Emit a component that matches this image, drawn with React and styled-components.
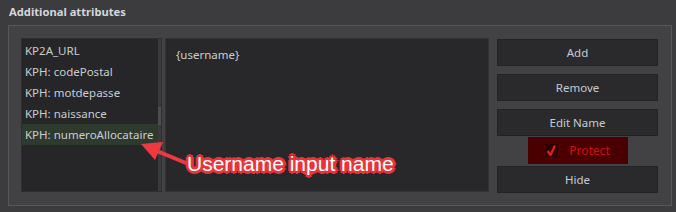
import React from 'react';
import styled, { createGlobalStyle } from 'styled-components';

const GlobalStyle = createGlobalStyle`
  body {
    margin: 0;
    background: #3c3c3f;
    font-family: "Noto Sans", "Open Sans", sans-serif;
    font-size: 11.5px;
    color: #cfd2d6;
  }
`;

const Page = styled.div`
  position: relative;
  width: 676px;
  height: 212px;
  padding: 4px 0 0 8px;
  box-sizing: border-box;
`;

const Title = styled.div`
  font-weight: bold;
  font-size: 11.2px;
  height: 21px;
  line-height: 16px;
  padding-left: 1px;
  color: #d4d6d9;
`;

const GroupBox = styled.div`
  width: 664px;
  height: 181px;
  box-sizing: border-box;
  border: 1px solid #57575b;
  background: #424245;
  padding: 12px;
  display: flex;
`;

const ListBox = styled.div`
  position: relative;
  width: 141px;
  height: 154px;
  box-sizing: border-box;
  background: #262628;
  border: 1px solid #2e2e31;
  padding-top: 1px;
`;

const ScrollTrack = styled.div`
  position: absolute;
  right: 0;
  top: 0;
  bottom: 0;
  width: 3px;
  background: #3a3a3d;
`;

const ScrollThumb = styled.div`
  position: absolute;
  right: 0;
  top: 68px;
  width: 3px;
  height: 18px;
  background: #4c4c50;
`;

const ListItem = styled.div`
  height: 21px;
  line-height: 21px;
  padding-left: 3px;
  margin-right: 3px;
  white-space: nowrap;
  color: #c9cdd1;
  background: ${p => (p.selected ? '#2f3a2f' : 'transparent')};
`;

const TextArea = styled.div`
  width: 324px;
  height: 154px;
  margin-left: 3px;
  box-sizing: border-box;
  background: #28282a;
  border: 1px solid #333336;
  padding: 8px 10px;
  color: #c9cdd1;
`;

const ButtonColumn = styled.div`
  width: 161px;
  margin-left: 8px;
  padding-top: 1px;
  display: flex;
  flex-direction: column;
  align-items: center;
`;

const Button = styled.div`
  width: 161px;
  height: 27px;
  box-sizing: border-box;
  margin-top: ${p => p.gap || 0}px;
  background: #2a2a2c;
  border: 1px solid #232325;
  display: flex;
  align-items: center;
  justify-content: center;
  color: #c6cbd1;
`;

const ProtectToggle = styled.div`
  width: 100px;
  height: 27px;
  margin-top: 1px;
  background: #4a0000;
  display: flex;
  align-items: center;
  justify-content: center;
  gap: 11px;
  color: #cc1010;
  font-size: 12px;
`;

const CheckBox = styled.span`
  width: 13px;
  height: 13px;
  background: #2c0000;
  display: flex;
  align-items: center;
  justify-content: center;
`;

const Annotation = styled.svg`
  position: absolute;
  left: 0;
  top: 0;
  pointer-events: none;
`;

const Callout = styled.span`
  position: absolute;
  left: 187px;
  top: 151px;
  font-family: "Liberation Sans", Arial, sans-serif;
  font-size: 21px;
  line-height: 26px;
  color: #ffffff;
  white-space: nowrap;
  text-shadow:
    2px 0 0 #e8353a, -2px 0 0 #e8353a, 0 2px 0 #e8353a, 0 -2px 0 #e8353a,
    2px 2px 0 #e8353a, -2px -2px 0 #e8353a, 2px -2px 0 #e8353a, -2px 2px 0 #e8353a,
    3px 0 0 #e8353a, -3px 0 0 #e8353a, 0 3px 0 #e8353a, 0 -3px 0 #e8353a;
`;

const items = ['KP2A_URL', 'KPH: codePostal', 'KPH: motdepasse', 'KPH: naissance', 'KPH: numeroAllocataire'];

export default function App() {
  return (
    <>
      <GlobalStyle />
      <Page>
        <Title>Additional attributes</Title>
        <GroupBox>
          <ListBox>
            {items.map((it, i) => (
              <ListItem key={it} selected={i === 4}>{it}</ListItem>
            ))}
            <ScrollTrack />
            <ScrollThumb />
          </ListBox>
          <TextArea>{'{username}'}</TextArea>
          <ButtonColumn>
            <Button>Add</Button>
            <Button gap={8}>Remove</Button>
            <Button gap={8}>Edit Name</Button>
            <ProtectToggle>
              <CheckBox>
                <svg width="13" height="13" viewBox="0 0 13 13">
                  <path d="M2.5 7 L5.5 11 L10 1.5" fill="none" stroke="#f01818" strokeWidth="2.2" strokeLinejoin="round" />
                </svg>
              </CheckBox>
              <span>Protect</span>
            </ProtectToggle>
            <Button gap={2}>Hide</Button>
          </ButtonColumn>
        </GroupBox>
        <Annotation width="676" height="212" viewBox="0 0 676 212">
          <line x1="186" y1="163" x2="152" y2="149" stroke="#ee3a3e" strokeWidth="4" strokeLinecap="round" />
          <polygon points="141,144 163,142 155,160" fill="#ee3a3e" />
        </Annotation>
        <Callout>Username input name</Callout>
      </Page>
    </>
  );
}
